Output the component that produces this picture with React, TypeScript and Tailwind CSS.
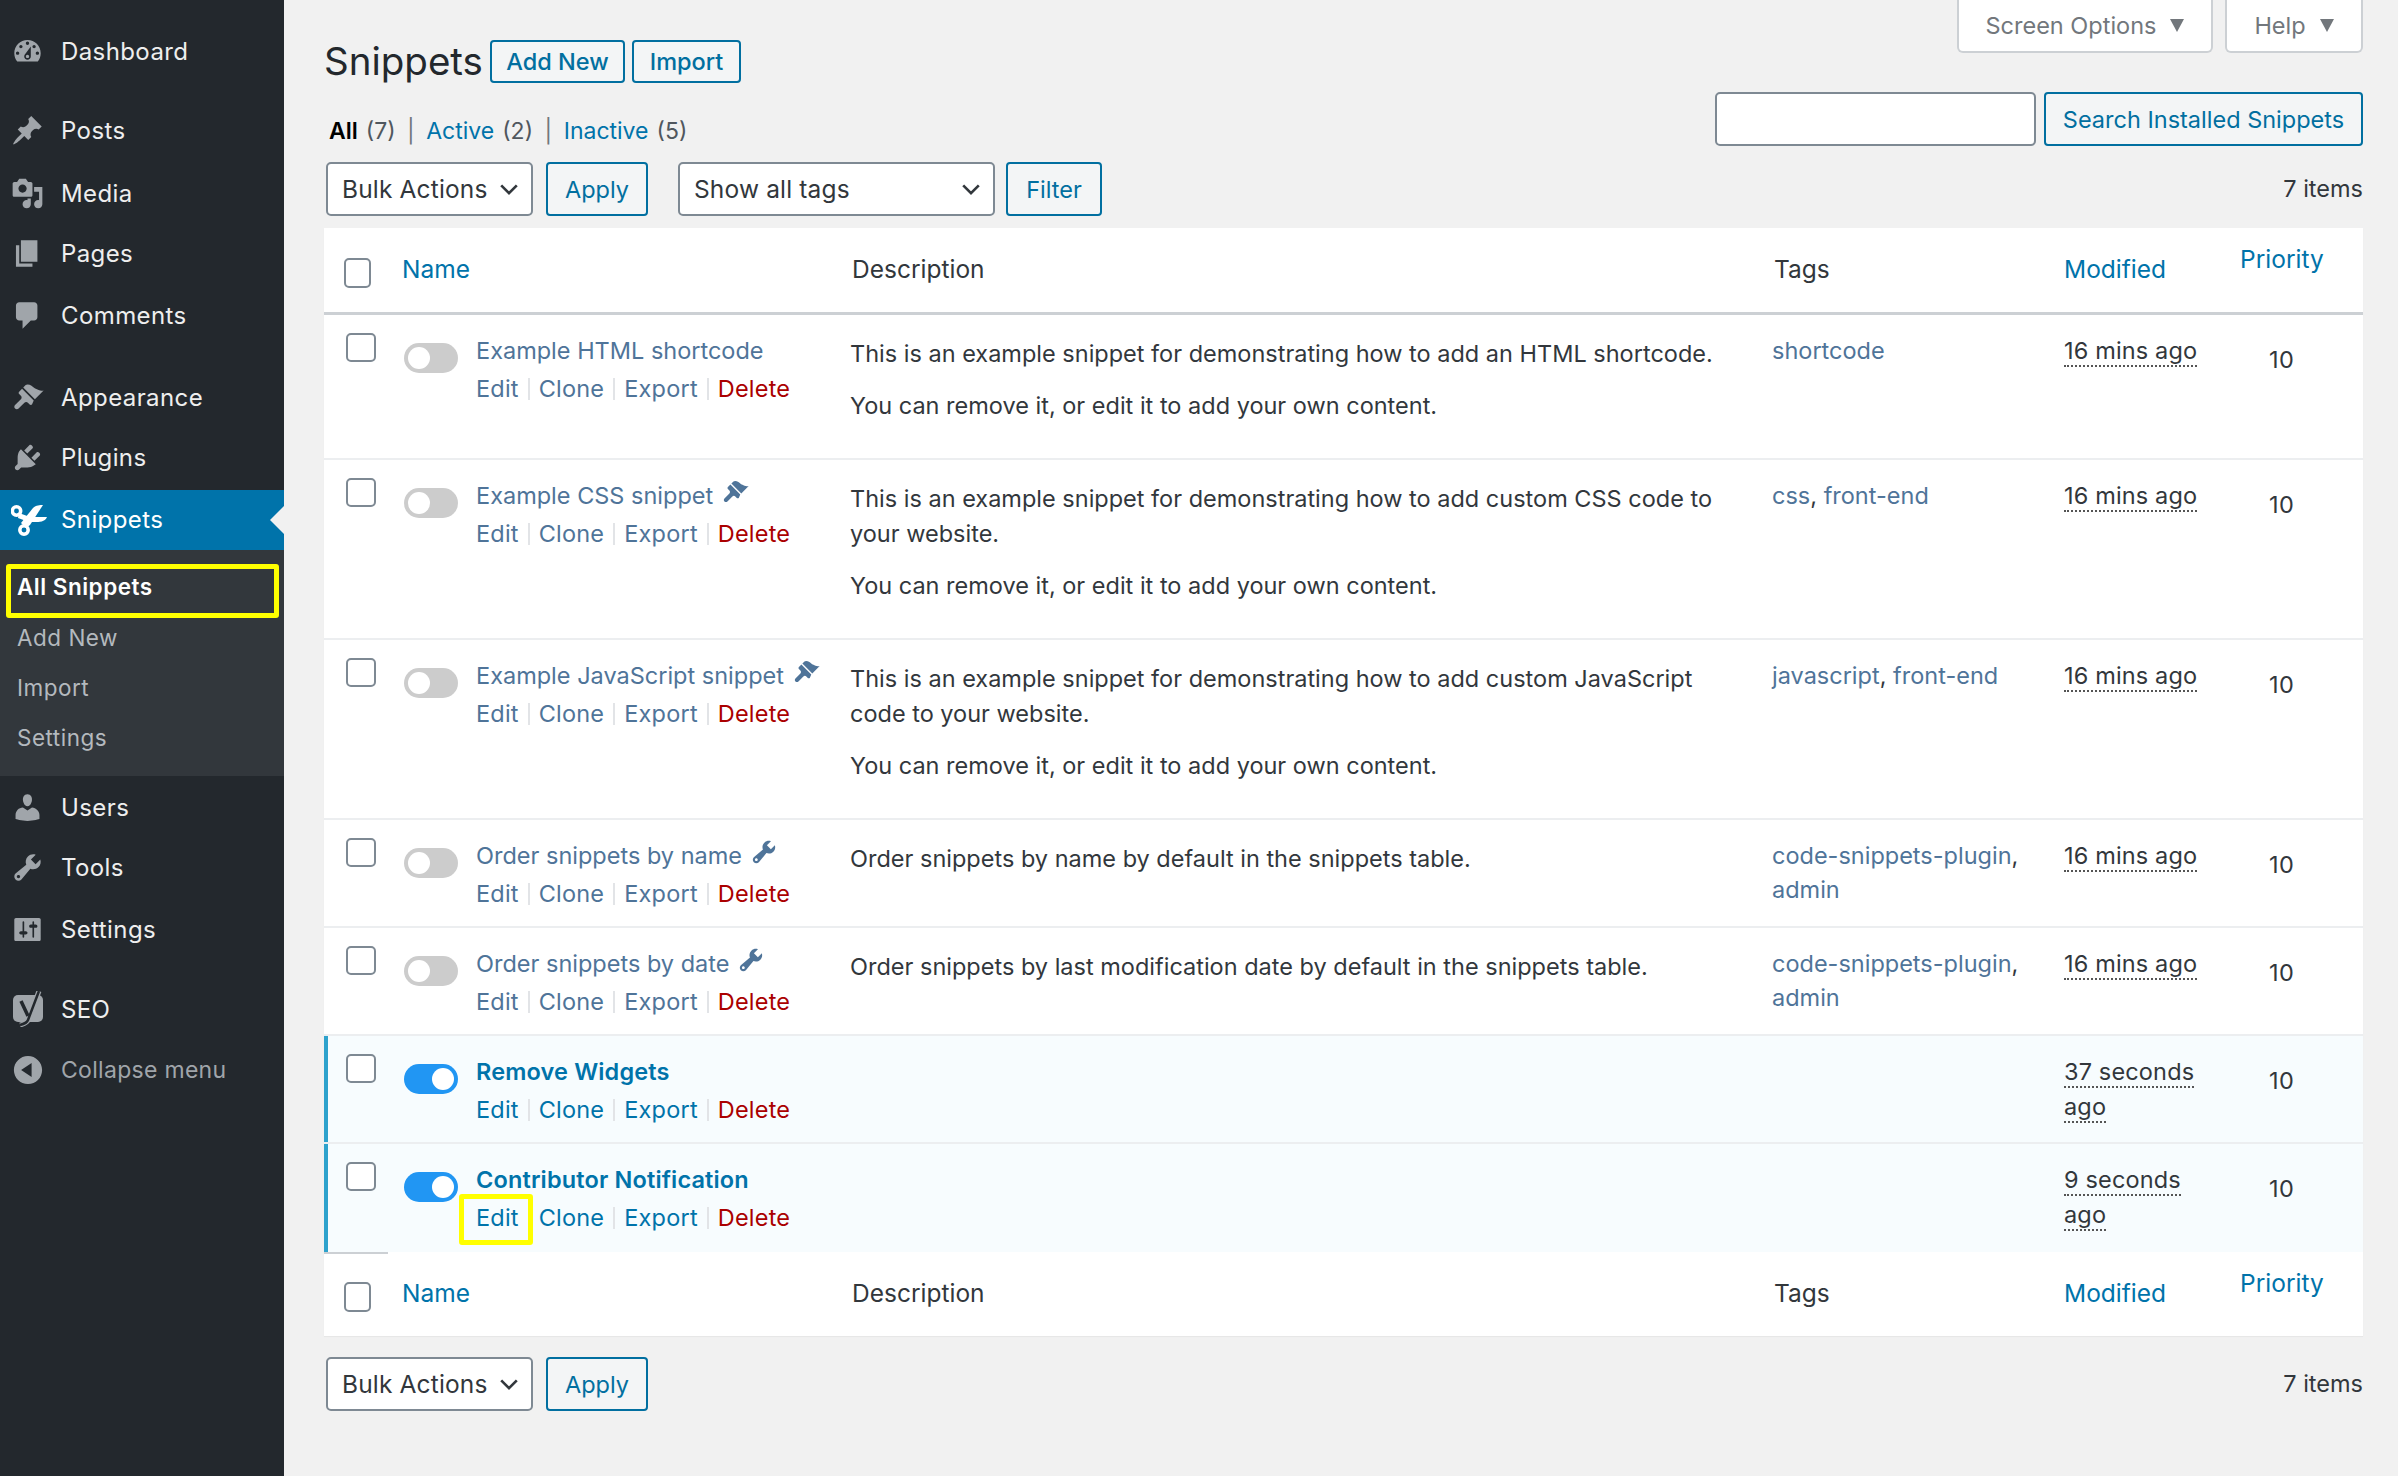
const ICONS: Record<string, string> = {
  dashboard:
    "M3.76 16h12.48c1.1-1.37 1.76-3.11 1.76-5 0-4.42-3.58-8-8-8s-8 3.58-8 8c0 1.89.66 3.63 1.76 5zM10 4c.55 0 1 .45 1 1s-.45 1-1 1-1-.45-1-1 .45-1 1-1zM6 6c.55 0 1 .45 1 1s-.45 1-1 1-1-.45-1-1 .45-1 1-1zm8 0c.55 0 1 .45 1 1s-.45 1-1 1-1-.45-1-1 .45-1 1-1zm-5.37 5.55L12 7v6c0 1.1-.9 2-2 2s-2-.9-2-2c0-.57.24-1.08.63-1.45zM4 10c.55 0 1 .45 1 1s-.45 1-1 1-1-.45-1-1 .45-1 1-1zm12 0c.55 0 1 .45 1 1s-.45 1-1 1-1-.45-1-1 .45-1 1-1zm-5 3c0-.55-.45-1-1-1s-1 .45-1 1 .45 1 1 1 1-.45 1-1z",
  post: "M10.44 3.02l1.82-1.82 6.36 6.35-1.83 1.82c-1.05-.68-2.48-.57-3.41.36l-.75.75c-.92.93-1.04 2.35-.35 3.41l-1.83 1.82-2.41-2.41-2.8 2.79c-.42.42-3.38 2.71-3.8 2.29s1.86-3.39 2.28-3.81l2.79-2.79L4.1 9.36l1.83-1.82c1.05.69 2.48.57 3.4-.36l.75-.75c.93-.92 1.05-2.35.36-3.41z",
  media:
    "M13 11V4c0-.55-.45-1-1-1h-1.67L9 1H5L3.67 3H2c-.55 0-1 .45-1 1v7c0 .55.45 1 1 1h10c.55 0 1-.45 1-1zM7 4.5c1.38 0 2.5 1.12 2.5 2.5S8.38 9.5 7 9.5 4.5 8.38 4.5 7 5.62 4.5 7 4.5zM14 6h5v10.5c0 1.38-1.12 2.5-2.5 2.5S14 17.88 14 16.5s1.12-2.5 2.5-2.5c.17 0 .34.02.5.05V9h-3V6zm-4 8.05V13h2v3.5c0 1.38-1.12 2.5-2.5 2.5S7 17.88 7 16.5 8.12 14 9.5 14c.17 0 .34.02.5.05z",
  page: "M6 15V2h10v13H6zm-1 1h8v2H3V5h2v11z",
  comments:
    "M5 2h9c1.1 0 2 .9 2 2v7c0 1.1-.9 2-2 2h-2l-5 5v-5H5c-1.1 0-2-.9-2-2V4c0-1.1.9-2 2-2z",
  appearance:
    "M14.48 11.06L7.41 3.99l1.5-1.5c.5-.56 2.3-.47 3.51.32 1.21.8 1.43 1.28 2.91 2.1 1.18.64 2.45 1.26 4.45.85zm-.71.71L6.7 4.7 4.93 6.47c-.39.39-.39 1.02 0 1.41l1.06 1.06c.59.56.59 1.53 0 2.12l-3.53 3.53c-.59.59-.59 1.54 0 2.12.59.59 1.54.59 2.13 0l3.53-3.53c.59-.59 1.56-.59 2.12 0l1.06 1.06c.39.39 1.02.39 1.41 0z",
  plugins:
    "M13.11 4.36L9.87 7.6 8 5.73l3.24-3.24c.35-.34 1.05-.2 1.56.32.52.51.66 1.21.31 1.55zm-8 1.77l.91-1.12 9.01 9.01-1.19.84c-.71.71-2.63 1.16-3.82 1.16H6.14L4.9 17.26c-.59.59-1.54.59-2.12 0-.59-.58-.59-1.53 0-2.12l1.24-1.24v-3.88c0-1.13.4-3.19 1.09-3.89zm7.26 3.97l3.24-3.24c.34-.35 1.04-.21 1.55.31.52.51.66 1.21.31 1.55l-3.24 3.25z",
  users:
    "M10 9.25c-2.27 0-2.73-3.44-2.73-3.44C7 4.02 7.82 2 9.97 2c2.16 0 2.98 2.02 2.71 3.81 0 0-.41 3.44-2.68 3.44zm0 2.57L12.72 10c2.39 0 4.52 2.33 4.52 4.53v2.49s-3.65 1.13-7.24 1.13c-3.65 0-7.24-1.13-7.24-1.13v-2.49c0-2.25 1.94-4.48 4.47-4.48z",
  tools:
    "M16.68 9.77c-1.34 1.34-3.3 1.67-4.95.99l-5.41 6.52c-.99.99-2.59.99-3.58 0s-.99-2.59 0-3.57l6.52-5.42c-.68-1.65-.35-3.61.99-4.95 1.28-1.28 3.12-1.62 4.72-1.06l-2.89 2.89 2.82 2.82 2.86-2.87c.53 1.58.18 3.39-1.08 4.65zM3.81 16.21c.4.39 1.04.39 1.43 0 .4-.4.4-1.04 0-1.43-.39-.4-1.03-.4-1.43 0-.39.39-.39 1.03 0 1.43z",
  settings:
    "M18 16V4c0-.55-.45-1-1-1H3c-.55 0-1 .45-1 1v12c0 .55.45 1 1 1h14c.55 0 1-.45 1-1zM8 11h1c.55 0 1 .45 1 1s-.45 1-1 1H8v1.5c0 .28-.22.5-.5.5s-.5-.22-.5-.5V13H6c-.55 0-1-.45-1-1s.45-1 1-1h1V5.5c0-.28.22-.5.5-.5s.5.22.5.5V11zm5-2h-1c-.55 0-1-.45-1-1s.45-1 1-1h1V5.5c0-.28.22-.5.5-.5s.5.22.5.5V7h1c.55 0 1 .45 1 1s-.45 1-1 1h-1v5.5c0 .28-.22.5-.5.5s-.5-.22-.5-.5V9z",
  collapse:
    "M10 2.16c4.33 0 7.84 3.51 7.84 7.84s-3.51 7.84-7.84 7.84S2.16 14.33 2.16 10 5.71 2.16 10 2.16zm2 11.72V6.12L6.18 9.97z",
};

function Dashicon({ name, className }: { name: string; className: string }) {
  return (
    <svg viewBox="0 0 20 20" fill="currentColor" className={className}>
      <path d={ICONS[name]} />
    </svg>
  );
}

function YoastIcon() {
  return (
    <svg viewBox="0 0 32 36" className="w-[32px] h-[36px] text-[#a0a5aa]" fill="none">
      <rect x="1" y="4" width="30" height="27" rx="5" fill="currentColor" />
      <path d="M27 0L16 29C15 32 12 33 8 34" stroke="currentColor" strokeWidth="5" />
      <path d="M27 0L16 29C15 32 12 33 8 34" stroke="#23282d" strokeWidth="2.5" />
      <path d="M9 10L16 25" stroke="#23282d" strokeWidth="3.5" />
    </svg>
  );
}

function ScissorsIcon() {
  return (
    <svg viewBox="0 0 36 31" className="w-[36px] h-[31px]" fill="none">
      <circle cx="5.500" cy="6" r="4.200" stroke="currentColor" strokeWidth="3.500" />
      <circle cx="13" cy="25" r="4.200" stroke="currentColor" strokeWidth="3.500" />
      <path fill="currentColor" d="M10 18L22 3C25 0 29 0 32 0L19 20L15 23z" />
      <path fill="currentColor" d="M8 8L19 12H36C34 17 28 17 24 17H18L7 13z" />
    </svg>
  );
}

function Chevron() {
  return (
    <svg viewBox="0 0 20 20" className="w-[24px] h-[24px] shrink-0 text-[#32373c]" fill="none" stroke="currentColor" strokeWidth="2.2">
      <path d="M3.500 7l6.500 6.500L16.500 7" />
    </svg>
  );
}

function Checkbox({ className }: { className: string }) {
  return <div className={`bg-white border-2 border-[#7e8993] rounded-[5px] shrink-0 ${className}`} />;
}

function MenuRow({ icon, label, className }: { icon: React.ReactNode; label: string; className: string }) {
  return (
    <div className={`flex items-center h-[60px] text-[#eee] text-[24px] tracking-[0.4px] ${className}`}>
      <div className="w-[61px] flex justify-center pr-[6px]">{icon}</div>
      <span className="pt-[1px]">{label}</span>
    </div>
  );
}

function Sidebar() {
  const ic = "w-[33px] h-[33px] text-[#a0a5aa]";
  return (
    <aside className="w-[284px] shrink-0 h-full bg-[#23282d] flex flex-col">
      <MenuRow icon={<Dashicon name="dashboard" className={ic} />} label="Dashboard" className="mt-[21px]" />
      <MenuRow icon={<Dashicon name="post" className={ic} />} label="Posts" className="mt-[19px]" />
      <MenuRow icon={<Dashicon name="media" className={ic} />} label="Media" className="mt-[3px]" />
      <MenuRow icon={<Dashicon name="page" className={ic} />} label="Pages" className="" />
      <MenuRow icon={<Dashicon name="comments" className={ic} />} label="Comments" className="mt-[2px]" />
      <MenuRow icon={<Dashicon name="appearance" className={ic} />} label="Appearance" className="mt-[22px]" />
      <MenuRow icon={<Dashicon name="plugins" className={ic} />} label="Plugins" className="" />
      <div className="relative mt-[3px] h-[60px] bg-[#0073aa] flex items-center text-white text-[24px] tracking-[0.4px]">
        <div className="w-[61px] flex justify-center pr-[3px]">
          <ScissorsIcon />
        </div>
        <span>Snippets</span>
        <div className="absolute right-0 top-[16px] w-0 h-0 border-y-[14px] border-y-transparent border-r-[14px] border-r-[#f1f1f1]" />
      </div>
      <div className="relative bg-[#32373c] h-[226px] pt-[12px] text-[22.5px] tracking-[0.5px] text-[#b4b9be]">
        <div className="h-[50px] flex items-center pl-[17px] font-semibold text-white">All Snippets</div>
        <div className="h-[51px] flex items-center pl-[17px]">Add New</div>
        <div className="h-[50px] flex items-center pl-[17px]">Import</div>
        <div className="h-[50px] flex items-center pl-[17px]">Settings</div>
        <div className="absolute left-[6px] top-[14px] w-[273px] h-[54px] border-[5px] border-[#ffff00] rounded-[3px]" />
      </div>
      <MenuRow icon={<Dashicon name="users" className={ic} />} label="Users" className="mt-[1px]" />
      <MenuRow icon={<Dashicon name="tools" className={ic} />} label="Tools" className="" />
      <MenuRow icon={<Dashicon name="settings" className={ic} />} label="Settings" className="mt-[2px]" />
      <MenuRow icon={<YoastIcon />} label="SEO" className="mt-[20px]" />
      <div className="flex items-center h-[60px] mt-[1px] text-[#a0a5aa] text-[23px] tracking-[0.3px]">
        <div className="w-[61px] flex justify-center pr-[6px]">
          <Dashicon name="collapse" className="w-[36px] h-[36px]" />
        </div>
        <span>Collapse menu</span>
      </div>
    </aside>
  );
}

function OutlineButton({ label, className }: { label: string; className: string }) {
  return (
    <button
      type="button"
      className={`bg-[#f3f5f6] border-2 border-[#016fa0] rounded-[4px] text-[#016fa0] flex items-center justify-center shrink-0 ${className}`}
    >
      {label}
    </button>
  );
}

function SelectBox({ label, className }: { label: string; className: string }) {
  return (
    <div
      className={`bg-white border-2 border-[#7e8993] rounded-[5px] h-[54px] pl-[14px] pr-[10px] flex items-center justify-between text-[24.5px] tracking-[0.15px] text-[#32373c] shrink-0 ${className}`}
    >
      <span>{label}</span>
      <Chevron />
    </div>
  );
}

function BulkRow() {
  return (
    <>
      <SelectBox label="Bulk Actions" className="w-[207px]" />
      <OutlineButton label="Apply" className="w-[102px] h-[54px] text-[23.5px] pt-[2px] ml-[13px]" />
    </>
  );
}

function TopBar() {
  return (
    <div className="flex justify-between h-[162px]">
      <div className="flex flex-col pt-[40px]">
        <div className="flex items-center h-[43px]">
          <h1 className="text-[38.5px] text-[#23282d] w-[166px]">Snippets</h1>
          <OutlineButton label="Add New" className="w-[135px] h-[43px] text-[23.5px] font-medium pt-[1px]" />
          <OutlineButton label="Import" className="w-[109px] h-[43px] text-[23.5px] font-medium pt-[1px] ml-[7px]" />
        </div>
        <div className="flex items-center mt-[30px] h-[36px] pl-[5px] text-[23px] text-[#50575e]">
          <span className="font-semibold text-black">All</span>
          <span className="ml-[8px]">(7)</span>
          <span className="mx-[11.5px] text-[#72777c]">|</span>
          <span className="text-[#0073aa]">Active</span>
          <span className="ml-[8px]">(2)</span>
          <span className="mx-[11.5px] text-[#72777c]">|</span>
          <span className="text-[#0073aa]">Inactive</span>
          <span className="ml-[8px]">(5)</span>
        </div>
      </div>
      <div className="flex flex-col items-end">
        <div className="flex gap-[12px] h-[53px]">
          <div className="w-[256px] bg-white border-2 border-t-0 border-[#ccd0d4] rounded-b-[6px] flex items-center justify-center gap-[14px] text-[23.5px] text-[#72777c]">
            <span>Screen Options</span>
            <span className="w-0 h-0 border-x-[7px] border-x-transparent border-t-[13px] border-t-[#72777c]" />
          </div>
          <div className="w-[138px] bg-white border-2 border-t-0 border-[#ccd0d4] rounded-b-[6px] flex items-center justify-center gap-[14px] text-[23.5px] text-[#72777c]">
            <span>Help</span>
            <span className="w-0 h-0 border-x-[7px] border-x-transparent border-t-[13px] border-t-[#72777c]" />
          </div>
        </div>
        <div className="flex gap-[8px] mt-[39px]">
          <div className="w-[321px] h-[54px] bg-white border-2 border-[#7e8993] rounded-[5px]" />
          <OutlineButton label="Search Installed Snippets" className="w-[319px] h-[54px] text-[23.5px] pt-[2px]" />
        </div>
      </div>
    </div>
  );
}

function Toolbar() {
  return (
    <div className="flex items-center h-[54px] pl-[2px]">
      <BulkRow />
      <SelectBox label="Show all tags" className="w-[317px] ml-[30px]" />
      <OutlineButton label="Filter" className="w-[96px] h-[54px] text-[23.5px] pt-[2px] ml-[11px]" />
      <span className="ml-auto text-[23.5px] text-[#32373c]">7 items</span>
    </div>
  );
}

function HeaderRow({ footer }: { footer?: boolean }) {
  return (
    <div
      className={`flex bg-white text-[24.5px] text-[#32373c] ${
        footer ? "h-[84px]" : "h-[87px] border-b-[3px] border-[#ccd0d4]"
      }`}
    >
      <div className="w-[78px] shrink-0 pl-[20px] pt-[30px]">
        <Checkbox className="w-[27px] h-[30px]" />
      </div>
      <div className="w-[450px] shrink-0 pt-[23px] leading-[36px] text-[#0073aa]">Name</div>
      <div className="w-[922px] shrink-0 pt-[23px] leading-[36px]">Description</div>
      <div className="w-[290px] shrink-0 pt-[23px] leading-[36px]">Tags</div>
      <div className="w-[176px] shrink-0 pt-[23px] leading-[36px] text-[#0073aa]">Modified</div>
      <div className="pt-[13px] leading-[36px] text-[#0073aa]">Priority</div>
    </div>
  );
}

function ActionLinks({ linkColor, highlight }: { linkColor: string; highlight?: boolean }) {
  const sep = "w-[2px] h-[22px] bg-[#e2e4e7] mx-[9px]";
  return (
    <div className="relative flex items-center h-[30px] mt-[8px] tracking-[0.2px]">
      <span className={linkColor}>Edit</span>
      <span className={sep} />
      <span className={linkColor}>Clone</span>
      <span className={sep} />
      <span className={linkColor}>Export</span>
      <span className={sep} />
      <span className="text-[#a00]">Delete</span>
      {highlight && (
        <div className="absolute -left-[17px] -top-[9px] w-[74px] h-[51px] border-[5px] border-[#ffff00] rounded-[3px]" />
      )}
    </div>
  );
}

interface Snippet {
  name: string;
  icon?: string;
  desc: string[];
  tags: string[][];
  modified: string;
  active?: boolean;
  height: string;
  highlight?: boolean;
}

const REMOVE = "You can remove it, or edit it to add your own content.";

const SNIPPETS: Snippet[] = [
  {
    name: "Example HTML shortcode",
    desc: ["This is an example snippet for demonstrating how to add an HTML shortcode.", REMOVE],
    tags: [["shortcode"]],
    modified: "16 mins ago",
    height: "h-[145px]",
  },
  {
    name: "Example CSS snippet",
    icon: "appearance",
    desc: ["This is an example snippet for demonstrating how to add custom CSS code to your website.", REMOVE],
    tags: [["css", "front-end"]],
    modified: "16 mins ago",
    height: "h-[180px]",
  },
  {
    name: "Example JavaScript snippet",
    icon: "appearance",
    desc: ["This is an example snippet for demonstrating how to add custom JavaScript code to your website.", REMOVE],
    tags: [["javascript", "front-end"]],
    modified: "16 mins ago",
    height: "h-[180px]",
  },
  {
    name: "Order snippets by name",
    icon: "tools",
    desc: ["Order snippets by name by default in the snippets table."],
    tags: [["code-snippets-plugin"], ["admin"]],
    modified: "16 mins ago",
    height: "h-[108px]",
  },
  {
    name: "Order snippets by date",
    icon: "tools",
    desc: ["Order snippets by last modification date by default in the snippets table."],
    tags: [["code-snippets-plugin"], ["admin"]],
    modified: "16 mins ago",
    height: "h-[108px]",
  },
  {
    name: "Remove Widgets",
    desc: [],
    tags: [],
    modified: "37 seconds ago",
    active: true,
    height: "h-[108px]",
  },
  {
    name: "Contributor Notification",
    desc: [],
    tags: [],
    modified: "9 seconds ago",
    active: true,
    height: "h-[108px]",
    highlight: true,
  },
];

function Row({ s, last }: { s: Snippet; last: boolean }) {
  const link = s.active ? "text-[#0073aa]" : "text-[#4f7499]";
  return (
    <div
      className={`flex text-[23.5px] text-[#32373c] ${s.height} ${last ? "" : "border-b-2 border-[#eceef0]"} ${
        s.active ? "bg-[#f7fcfe] shadow-[inset_4px_0_0_#2ea2cc]" : "bg-white"
      }`}
    >
      <div className="w-[80px] shrink-0 pl-[22px] pt-[18px]">
        <Checkbox className="w-[30px] h-[29px]" />
      </div>
      <div className="w-[72px] shrink-0 pt-[28px]">
        <div
          className={`relative w-[54px] h-[30px] rounded-full ${s.active ? "bg-[#2196f3]" : "bg-[#cccccc]"}`}
        >
          <div
            className={`absolute top-[4px] w-[22px] h-[22px] rounded-full bg-white ${
              s.active ? "left-[28px]" : "left-[4px]"
            }`}
          />
        </div>
      </div>
      <div className="w-[374px] shrink-0 pt-[21px]">
        <div className={`flex items-center h-[30px] gap-[8px] ${link} ${s.active ? "font-semibold tracking-[0.15px]" : ""}`}>
          <span>{s.name}</span>
          {s.icon && <Dashicon name={s.icon} className="w-[28px] h-[28px] -mt-[8px]" />}
        </div>
        <ActionLinks linkColor={link} highlight={s.highlight} />
      </div>
      <div className="w-[922px] shrink-0 pt-[21px] pr-[42px] leading-[35px]">
        {s.desc.map((d) => (
          <p key={d} className="mb-[17px]">
            {d}
          </p>
        ))}
      </div>
      <div className="w-[292px] shrink-0 pt-[19px] leading-[34px] text-[#4f7499]">
        {s.tags.map((group) => (
          <div key={group.join()}>
            {group.map((t, i) => (
              <span key={t}>
                {i > 0 && <span className="text-[#32373c]">, </span>}
                {t}
              </span>
            ))}
            {group[0] === "code-snippets-plugin" && <span className="text-[#32373c]">,</span>}
          </div>
        ))}
      </div>
      <div className="w-[176px] shrink-0 pt-[18px] pr-[20px] leading-[35px] tracking-[0.15px]">
        <span className="border-b-2 border-dotted border-[#555]">{s.modified}</span>
      </div>
      <div className="pl-[29px] pt-[27px] leading-[35px] tracking-[0.5px]">10</div>
    </div>
  );
}

export default function App() {
  return (
    <div className="w-[2398px] h-[1476px] flex bg-[#f1f1f1] overflow-hidden font-['Inter','Noto_Sans',sans-serif] text-[#32373c]">
      <Sidebar />
      <main className="flex-1 pl-[40px] pr-[35px]">
        <TopBar />
        <Toolbar />
        <div className="mt-[12px] shadow-[0_1px_1px_rgba(0,0,0,0.04)]">
          <HeaderRow />
          {SNIPPETS.map((s, i) => (
            <Row key={s.name} s={s} last={i === SNIPPETS.length - 1} />
          ))}
          <div className="relative">
            <div className="absolute left-0 top-0 w-[64px] h-[2px] bg-[#ccd0d4]" />
            <HeaderRow footer />
          </div>
        </div>
        <div className="flex items-center h-[54px] mt-[21px] pl-[2px]">
          <BulkRow />
          <span className="ml-auto text-[23.5px] text-[#32373c]">7 items</span>
        </div>
      </main>
    </div>
  );
}
